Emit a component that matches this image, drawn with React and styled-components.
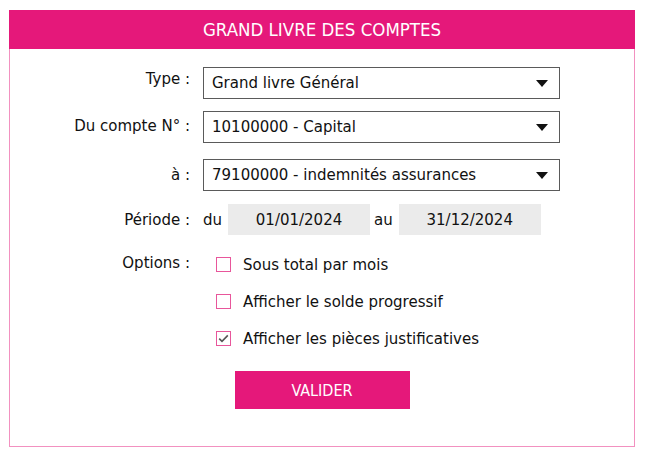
import React from "react";
import styled, { createGlobalStyle } from "styled-components";

const Global = createGlobalStyle`
  html, body { margin: 0; padding: 0; background: #ffffff; }
  body { font-family: "DejaVu Sans", Verdana, sans-serif; color: #111; }
  * { box-sizing: border-box; }
`;

const Page = styled.div`
  padding: 10px 0 0 9px;
`;

const Panel = styled.section`
  width: 626px;
  display: flex;
  flex-direction: column;
`;

const Header = styled.header`
  height: 39px;
  background: #e5187a;
  color: #fff;
  display: flex;
  align-items: center;
  justify-content: center;
  font-family: "DejaVu Sans Condensed", "DejaVu Sans", sans-serif;
  font-stretch: condensed;
  font-size: 18.5px;
  padding-bottom: 1px;
`;

const Body = styled.div`
  border: 1px solid #f291c0;
  border-top: none;
  padding: 18px 0 37px;
  display: flex;
  flex-direction: column;
`;

const Row = styled.div`
  display: flex;
  align-items: ${(p) => (p.$top ? "flex-start" : "center")};
  margin-top: ${(p) => p.$mt || 0}px;
`;

const Label = styled.div`
  width: 180px;
  flex: none;
  text-align: right;
  font-size: 15px;
  margin-right: 13px;
  line-height: ${(p) => (p.$lh ? p.$lh + "px" : "normal")};
  padding-bottom: ${(p) => p.$raise || 0}px;
  white-space: pre;
`;

const Select = styled.div`
  width: 357px;
  height: 32px;
  border: 1px solid #5a5a5a;
  display: flex;
  align-items: center;
  justify-content: space-between;
  padding: 0 11px 0 8px;
  font-size: 15px;
  color: #111;
  background: #fff;
`;

const Arrow = styled.span`
  width: 0;
  height: 0;
  border-left: 6px solid transparent;
  border-right: 6px solid transparent;
  border-top: 7px solid #111;
  margin-top: 1px;
`;

const Word = styled.span`
  font-size: 15px;
  margin-right: 6px;
`;

const DateBox = styled.div`
  width: 142px;
  height: 31px;
  background: #ebebeb;
  display: flex;
  align-items: center;
  justify-content: center;
  font-size: 15px;
  margin-right: ${(p) => p.$mr || 0}px;
`;

const Options = styled.div`
  display: flex;
  flex-direction: column;
  gap: 12px;
  padding-left: 13px;
`;

const Option = styled.label`
  display: flex;
  align-items: center;
  height: 25px;
  font-size: 15px;
`;

const Box = styled.span`
  width: 15px;
  height: 15px;
  border: 1.5px solid #e8569b;
  margin-right: 12px;
  display: flex;
  align-items: center;
  justify-content: center;
  background: #fff;
`;

const Button = styled.button`
  align-self: center;
  margin-top: 20px;
  width: 175px;
  height: 38px;
  border: none;
  background: #e5187a;
  color: #fff;
  font-family: "DejaVu Sans Condensed", "DejaVu Sans", sans-serif;
  font-stretch: condensed;
  font-size: 16px;
  cursor: pointer;
  padding: 0;
`;

function Check({ checked }) {
  return (
    <Box>
      {checked && (
        <svg width="11" height="9" viewBox="0 0 11 9">
          <path d="M1.2 4.6 L4 7.3 L9.8 1.4" fill="none" stroke="#555" strokeWidth="1.6" />
        </svg>
      )}
    </Box>
  );
}

export default function App() {
  return (
    <>
      <Global />
      <Page>
        <Panel>
          <Header>GRAND LIVRE DES COMPTES</Header>
          <Body>
            <Row>
              <Label $raise={8}>Type :</Label>
              <Select>
                <span>Grand livre Général</span>
                <Arrow />
              </Select>
            </Row>
            <Row $mt={12}>
              <Label $raise={2}>Du compte N° :</Label>
              <Select>
                <span>10100000 - Capital</span>
                <Arrow />
              </Select>
            </Row>
            <Row $mt={16}>
              <Label>à :</Label>
              <Select>
                <span>79100000 - indemnités assurances</span>
                <Arrow />
              </Select>
            </Row>
            <Row $mt={13}>
              <Label>Période :</Label>
              <Word>du</Word>
              <DateBox $mr={4}>01/01/2024</DateBox>
              <Word>au</Word>
              <DateBox>31/12/2024</DateBox>
            </Row>
            <Row $mt={17} $top>
              <Label $lh={22}>Options :</Label>
              <Options>
                <Option><Check />Sous total par mois</Option>
                <Option><Check />Afficher le solde progressif</Option>
                <Option><Check checked />Afficher les pièces justificatives</Option>
              </Options>
            </Row>
            <Button>VALIDER</Button>
          </Body>
        </Panel>
      </Page>
    </>
  );
}
